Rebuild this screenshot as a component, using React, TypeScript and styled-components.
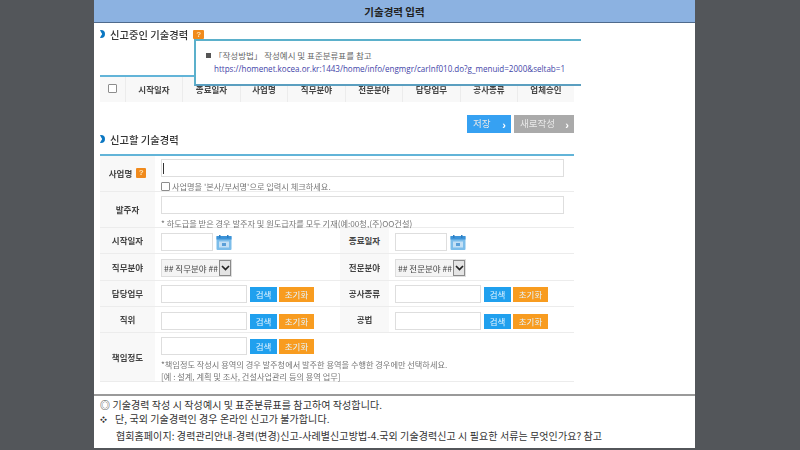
import React from "react";
import styled, { createGlobalStyle } from "styled-components";

const Global = createGlobalStyle`
  html, body { margin: 0; padding: 0; background: #53565a; overflow: hidden; }
  * { box-sizing: border-box; }
  body { font-family: "Noto Sans CJK KR", "Liberation Sans", sans-serif; }
`;

const Page = styled.div`
  width: 800px;
  height: 450px;
  padding-left: 94px;
  background: #53565a;
`;
const Panel = styled.div`
  width: 601px;
  height: 448px;
  background: #fff;
  display: flex;
  flex-direction: column;
`;
const TitleBar = styled.div`
  height: 23px;
  flex: none;
  background: #8cb2e1;
  border-bottom: 1px solid #4f6a8c;
  display: flex;
  align-items: center;
  justify-content: center;
  font-size: 10.5px;
  font-weight: 700;
  color: #222;
`;
const Body = styled.div`
  position: relative;
  height: 371px;
  flex: none;
  padding: 0 0 0 6px;
  width: 487px;
  filter: blur(0.35px);
`;
const SectionHead = styled.div<{ $h: number; $pb?: number }>`
  height: ${(p) => p.$h}px;
  padding-bottom: ${(p) => p.$pb ?? 0}px;
  display: flex;
  align-items: center;
  gap: 5px;
  font-size: 10.3px;
  font-weight: 500;
  color: #333;
  width: 474px;
`;
const Help = styled.span<{ $w: number; $h: number }>`
  width: ${(p) => p.$w}px;
  height: ${(p) => p.$h}px;
  background: #f08a1c;
  color: #ffe2b0;
  font-size: 8px;
  font-weight: 700;
  line-height: ${(p) => p.$h}px;
  text-align: center;
  border-radius: 1px;
  flex: none;
  font-family: "Liberation Sans", sans-serif;
`;
const ListGap = styled.div`
  height: 30px;
`;
const ListHead = styled.div`
  width: 474px;
  height: 27px;
  border-top: 2px solid #62b4d8;
  background: #f8f8f8;
  display: grid;
  grid-template-columns: 25px 57px 58px 47px 58px 57px 58px 57px 57px;
  align-items: center;
`;
const ListCell = styled.div`
  height: 100%;
  display: flex;
  align-items: center;
  justify-content: center;
  padding-bottom: 2px;
  font-size: 8.5px;
  font-weight: 700;
  color: #444;
  border-left: 1px solid #ececec;
  &:first-child { border-left: 0; }
`;
const Check = styled.span<{ $size: number }>`
  width: ${(p) => p.$size}px;
  height: ${(p) => p.$size}px;
  border: 1px solid #8d8d8d;
  background: #fff;
  border-radius: 1px;
  display: inline-block;
  flex: none;
`;
const Actions = styled.div`
  width: 474px;
  height: 31px;
  padding-top: 13px;
  display: flex;
  justify-content: flex-end;
  gap: 3px;
`;
const ActionBtn = styled.div<{ $bg: string; $w: number }>`
  width: ${(p) => p.$w}px;
  height: 18px;
  background: ${(p) => p.$bg};
  color: #e8e8e8;
  font-size: 9.5px;
  display: flex;
  align-items: center;
  justify-content: space-between;
  padding: 0 5px 2px 6px;
`;
const Chev = styled.span`
  font-size: 11px;
  font-weight: 700;
  color: #fff;
  line-height: 1;
  font-family: "Liberation Sans", sans-serif;
  padding-top: 4px;
`;
const Popover = styled.div`
  position: absolute;
  left: 100px;
  top: 16px;
  width: 387px;
  height: 47px;
  background: #fff;
  border-top: 2px solid #5bb0cb;
  border-bottom: 2px solid #5b9fc0;
  border-left: 2px solid #5bb0cb;
  padding: 8px 0 0 10px;
  font-size: 8.5px;
  line-height: 13px;
  color: #666;
`;
const Square = styled.span`
  display: inline-block;
  width: 5px;
  height: 5px;
  background: #555;
  margin-right: 3px;
  vertical-align: 1px;
`;
const Link = styled.div`
  color: #3f45a8;
  font-family: "Open Sans", "Noto Sans", sans-serif;
  font-size: 8.05px;
  white-space: nowrap;
  padding-left: 8px;
`;
const Form = styled.div`
  width: 474px;
  border-top: 2px solid #62b4d8;
  display: grid;
  grid-template-columns: 55px 185px 49px 185px;
  grid-template-rows: 36px 36px 26px 27px 26px 26px 49px;
`;
const Label = styled.div`
  background: #f8f8f8;
  border-bottom: 1px solid #ececec;
  display: flex;
  align-items: center;
  justify-content: center;
  gap: 4px;
  padding-bottom: 1px;
  font-size: 8.5px;
  font-weight: 700;
  color: #444;
`;
const Value = styled.div<{ $span?: boolean; $pt?: number }>`
  grid-column: ${(p) => (p.$span ? "2 / 5" : "auto")};
  border-bottom: 1px solid #ececec;
  padding: ${(p) => p.$pt ?? 4}px 6px 0;
  display: flex;
  flex-direction: column;
  gap: 3px;
`;
const Line = styled.div`
  display: flex;
  align-items: center;
  gap: 3px;
`;
const TextInput = styled.div<{ $w: number }>`
  width: ${(p) => p.$w}px;
  height: 18px;
  background: #fff;
  border: 1px solid #dedede;
  flex: none;
  display: flex;
  align-items: center;
  padding-left: 1px;
`;
const Caret = styled.span`
  width: 1px;
  height: 11px;
  background: #333;
`;
const Hint = styled.div`
  font-size: 8.2px;
  line-height: 12px;
  height: 12px;
  color: #777;
  white-space: nowrap;
  display: flex;
  align-items: center;
  gap: 2px;
`;
const HintGroup = styled.div`
  display: flex;
  flex-direction: column;
`;
const Btn = styled.div<{ $bg: string; $w: number }>`
  width: ${(p) => p.$w}px;
  height: 15px;
  background: ${(p) => p.$bg};
  color: #e4f4ff;
  font-size: 8.5px;
  display: flex;
  align-items: center;
  justify-content: center;
  flex: none;
`;
const BtnPair = styled.div`
  display: flex;
  gap: 2px;
`;
const SelectBox = styled.div`
  width: 71px;
  height: 18px;
  border: 1px solid #dedede;
  background: #f4f4f4;
  display: flex;
  align-items: center;
  justify-content: space-between;
  font-size: 8.5px;
  color: #444;
  padding-left: 2px;
  white-space: nowrap;
`;
const SelectArrow = styled.span`
  width: 12px;
  height: 16px;
  background: #e4e4e4;
  border: 1px solid #8a8a8a;
  display: flex;
  align-items: center;
  justify-content: center;
  flex: none;
`;
const Footer = styled.div`
  flex: 1;
  border-top: 2px solid #9a9a9a;
  padding-left: 6px;
  font-size: 10px;
  color: #333;
  letter-spacing: 0.08px;
`;
const FootLine = styled.div<{ $pl?: number; $h: number }>`
  height: ${(p) => p.$h}px;
  padding-left: ${(p) => p.$pl ?? 0}px;
  display: flex;
  align-items: center;
  white-space: nowrap;
`;
const Glyph = styled.span`
  font-size: 7px;
  width: 15px;
  flex: none;
`;

const Bullet = () => (
  <svg width="5" height="8" viewBox="0 0 5 8">
    <path d="M0 0h1a4 4 0 0 1 0 8H0l1.2-2.4a2 2 0 0 0 0-3.2z" fill="#0b77c2" />
  </svg>
);
const Calendar = () => (
  <svg width="16" height="15" viewBox="0 0 16 15">
    <rect x="0.5" y="1" width="15" height="14" rx="1" fill="#7cbdea" />
    <rect x="0.5" y="1" width="15" height="3.5" fill="#3c93d8" />
    <rect x="3" y="0" width="1.5" height="3" fill="#2d7fc2" />
    <rect x="11" y="0" width="1.5" height="3" fill="#2d7fc2" />
    <rect x="3" y="6.5" width="10" height="6" fill="#c4e0f5" />
    <rect x="6" y="8" width="4" height="3" fill="#5a9fd8" />
  </svg>
);
const ArrowIcon = () => (
  <svg width="9" height="6" viewBox="0 0 9 6">
    <path d="M1 1l3.5 3.5L8 1" fill="none" stroke="#222" strokeWidth="1.7" />
  </svg>
);
const SearchPair = () => (
  <BtnPair>
    <Btn $bg="#20a0ee" $w={27}>검색</Btn>
    <Btn $bg="#f89c20" $w={35}>초기화</Btn>
  </BtnPair>
);
const DateField = () => (
  <Line><TextInput $w={52} /><Calendar /></Line>
);
const Picker = ({ text }: { text: string }) => (
  <SelectBox>{text}<SelectArrow><ArrowIcon /></SelectArrow></SelectBox>
);
const SearchField = () => (
  <Line><TextInput $w={86} /><SearchPair /></Line>
);

const listCols = ["시작일자", "종료일자", "사업명", "직무분야", "전문분야", "담당업무", "공사종류", "업체승인"];

export default function App() {
  return (
    <Page>
      <Global />
      <Panel>
        <TitleBar>기술경력 입력</TitleBar>
        <Body>
          <SectionHead $h={22}>
            <Bullet />
            신고중인 기술경력
            <Help $w={11} $h={9}>?</Help>
          </SectionHead>
          <ListGap />
          <ListHead>
            <ListCell><Check $size={9} /></ListCell>
            {listCols.map((c) => <ListCell key={c}>{c}</ListCell>)}
          </ListHead>
          <Actions>
            <ActionBtn $bg="#36a1f2" $w={44}>저장<Chev>›</Chev></ActionBtn>
            <ActionBtn $bg="#aaaaaa" $w={60}>새로작성<Chev>›</Chev></ActionBtn>
          </Actions>
          <SectionHead $h={21} $pb={9}>
            <Bullet />
            신고할 기술경력
          </SectionHead>
          <Form>
            <Label>사업명<Help $w={10} $h={10}>?</Help></Label>
            <Value $span $pt={3}>
              <TextInput $w={403}><Caret /></TextInput>
              <Hint><Check $size={9} />사업명을 '본사/부서명'으로 입력시 체크하세요.</Hint>
            </Value>
            <Label>발주자</Label>
            <Value $span>
              <TextInput $w={403} />
              <Hint>* 하도급을 받은 경우 발주자 및 원도급자를 모두 기재(예:00청,(주)OO건설)</Hint>
            </Value>
            <Label>시작일자</Label>
            <Value $pt={5}><DateField /></Value>
            <Label>종료일자</Label>
            <Value $pt={5}><DateField /></Value>
            <Label>직무분야</Label>
            <Value $pt={5}><Picker text="## 직무분야 ##" /></Value>
            <Label>전문분야</Label>
            <Value $pt={5}><Picker text="## 전문분야 ##" /></Value>
            <Label>담당업무</Label>
            <Value><SearchField /></Value>
            <Label>공사종류</Label>
            <Value><SearchField /></Value>
            <Label>직위</Label>
            <Value $pt={5}><SearchField /></Value>
            <Label>공법</Label>
            <Value $pt={5}><SearchField /></Value>
            <Label>책임정도</Label>
            <Value $span>
              <SearchField />
              <HintGroup>
                <Hint>*책임정도 작성시 용역의 경우 발주청에서 발주한 용역을 수행한 경우에만 선택하세요.</Hint>
                <Hint>[예 : 설계, 계획 및 조사, 건설사업관리 등의 용역 업무]</Hint>
              </HintGroup>
            </Value>
          </Form>
          <Popover>
            <div><Square />「작성방법」 작성예시 및 표준분류표를 참고</div>
            <Link>https://homenet.kocea.or.kr:1443/home/info/engmgr/carInf010.do?g_menuid=2000&amp;seltab=1</Link>
          </Popover>
        </Body>
        <Footer>
          <FootLine $h={16}>◎ 기술경력 작성 시 작성예시 및 표준분류표를 참고하여 작성합니다.</FootLine>
          <FootLine $h={13}><Glyph>❖</Glyph>단, 국외 기술경력인 경우 온라인 신고가 불가합니다.</FootLine>
          <FootLine $h={20} $pl={16}>협회홈페이지: 경력관리안내-경력(변경)신고-사례별신고방법-4.국외 기술경력신고 시 필요한 서류는 무엇인가요? 참고</FootLine>
        </Footer>
      </Panel>
    </Page>
  );
}
